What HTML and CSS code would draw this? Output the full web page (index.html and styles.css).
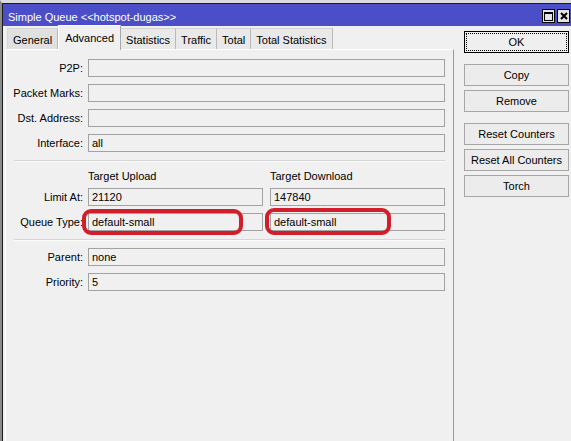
FILE: index.html
```html
<!DOCTYPE html>
<html>
<head>
<meta charset="utf-8">
<title>Simple Queue</title>
<link rel="stylesheet" href="styles.css">
</head>
<body>
<div class="frame">
  <div class="window">
    <div class="titlebar">
      <span class="title">Simple Queue &lt;&lt;hotspot-dugas&gt;&gt;</span>
      <div class="tb-buttons">
        <span class="tb-btn">
          <svg width="9" height="9" viewBox="0 0 9 9"><rect x="0.5" y="0.5" width="8" height="8" fill="none" stroke="#000"/><rect x="0" y="0" width="9" height="2" fill="#000"/></svg>
        </span>
        <span class="tb-btn">
          <svg width="8" height="8" viewBox="0 0 8 8"><path d="M1 1 L7 7 M7 1 L1 7" stroke="#000" stroke-width="2" fill="none"/></svg>
        </span>
      </div>
    </div>
    <div class="main">
      <div class="left">
        <div class="tabs">
          <span class="tab tab-hover">General</span>
          <span class="tab tab-active">Advanced</span>
          <span class="tab">Statistics</span>
          <span class="tab">Traffic</span>
          <span class="tab">Total</span>
          <span class="tab">Total Statistics</span>
        </div>
        <div class="panel">
          <div class="group">
            <div class="row"><span class="lbl">P2P:</span><span class="field"></span></div>
            <div class="row"><span class="lbl">Packet Marks:</span><span class="field"></span></div>
            <div class="row"><span class="lbl">Dst. Address:</span><span class="field"></span></div>
            <div class="row"><span class="lbl">Interface:</span><span class="field">all</span></div>
          </div>
          <div class="sep"></div>
          <div class="rates">
            <div class="row head"><span class="lbl"></span><span class="pair"><span class="colhead">Target Upload</span><span class="colhead">Target Download</span></span></div>
            <div class="row"><span class="lbl">Limit At:</span><span class="pair"><span class="field">21120</span><span class="field">147840</span></span></div>
            <div class="row"><span class="lbl">Queue Type:</span><span class="pair"><span class="field">default-small</span><span class="field">default-small</span></span></div>
          </div>
          <div class="sep"></div>
          <div class="group">
            <div class="row"><span class="lbl">Parent:</span><span class="field">none</span></div>
            <div class="row"><span class="lbl">Priority:</span><span class="field">5</span></div>
          </div>
          <span class="mark mark-up"></span>
          <span class="mark mark-down"></span>
        </div>
      </div>
      <div class="right">
        <div class="btn btn-ok"><span class="focus">OK</span></div>
        <div class="btn gap-top">Copy</div>
        <div class="btn">Remove</div>
        <div class="btn gap-top">Reset Counters</div>
        <div class="btn">Reset All Counters</div>
        <div class="btn">Torch</div>
      </div>
    </div>
  </div>
</div>
</body>
</html>
```
FILE: styles.css
```css
html, body {
  margin: 0;
  padding: 0;
  height: 100%;
  overflow: hidden;
}
body {
  background: #f0f0f0;
  font-family: "Liberation Sans", Arial, sans-serif;
  font-size: 11px;
  color: #000;
}
.frame {
  height: 100%;
  box-sizing: border-box;
  border-top: 3px solid #dcdcdc;
  border-left: 2px solid #8c8c8c;
}
.window {
  height: 100%;
  box-sizing: border-box;
  border-top: 1px solid #1c1c1c;
  border-left: 1px solid #1c1c1c;
  display: flex;
  flex-direction: column;
}
.titlebar {
  height: 22px;
  flex: none;
  background: #4b4ec6;
  color: #fff;
  display: flex;
  align-items: center;
  padding-left: 5px;
}
.title {
  font-size: 11px;
  line-height: 13px;
  padding-top: 5px;
}
.tb-buttons {
  margin-left: auto;
  display: flex;
  gap: 2px;
  padding-right: 1px;
  padding-top: 2px;
}
.tb-btn {
  width: 11px;
  height: 12px;
  border: 1px solid #000;
  background: #e4e4e4;
  display: flex;
  align-items: center;
  justify-content: center;
}
.main {
  flex: 1;
  display: flex;
  min-height: 0;
}
.left {
  width: 451px;
  flex: none;
  display: flex;
  flex-direction: column;
}
.tabs {
  height: 23px;
  flex: none;
  display: flex;
  align-items: flex-end;
  padding-left: 4px;
  position: relative;
  z-index: 1;
}
.tab {
  box-sizing: border-box;
  height: 21px;
  padding: 5px 5px 0;
  line-height: 13px;
  background: #e9e9e9;
  border-top: 1px solid #d4d4d4;
  border-right: 1px solid #b9b9b9;
  white-space: nowrap;
}
.tab-hover {
  background: #e0e0e0;
  border-left: 1px solid #d4d4d4;
}
.tab-active {
  height: 25px;
  padding: 6px 6px 0;
  margin-bottom: -1px;
  background: #f0f0f0;
  border-top: 1px solid #fff;
  border-left: 1px solid #fff;
  border-right: 1px solid #a8a8a8;
}
.panel {
  flex: 1;
  margin-left: 2px;
  position: relative;
  background: #f0f0f0;
  border-top: 1px solid #fff;
  border-left: 1px solid #fff;
  border-right: 1px solid #9a9a9a;
  padding: 9px 8px 0 0;
}
.group {
  display: flex;
  flex-direction: column;
  gap: 7px;
}
.rates {
  display: flex;
  flex-direction: column;
  gap: 7px;
}
.row {
  display: grid;
  grid-template-columns: 77px 1fr;
  column-gap: 5px;
  align-items: center;
  height: 18px;
}
.row.head {
  height: 14px;
  margin-top: 7px;
  margin-bottom: -2px;
}
.lbl {
  text-align: right;
  white-space: nowrap;
}
.field {
  height: 18px;
  box-sizing: border-box;
  border: 1px solid #a2a2a2;
  background: #f0f0f0;
  padding-left: 3px;
  line-height: 16px;
  white-space: nowrap;
  overflow: hidden;
}
.pair {
  display: grid;
  grid-template-columns: 1fr 1fr;
  column-gap: 7px;
}
.colhead {
  line-height: 14px;
}
.sep {
  margin: 8px 0 0 8px;
  height: 1px;
  background: #d6d6d6;
  border-bottom: 1px solid #fbfbfb;
}
.sep + .group {
  margin-top: 7px;
}
.mark {
  position: absolute;
  border: 4px solid #d21e2a;
  border-radius: 9px;
  box-sizing: border-box;
}
.mark-up {
  left: 76px;
  top: 159px;
  width: 161px;
  height: 26px;
}
.mark-down {
  left: 259px;
  top: 158px;
  width: 126px;
  height: 27px;
}
.right {
  flex: 1;
  display: flex;
  flex-direction: column;
  padding: 5px 2px 0 10px;
  gap: 4px;
}
.btn {
  height: 22px;
  box-sizing: border-box;
  border: 1px solid #a6a6a6;
  background: #ececec;
  display: flex;
  align-items: center;
  justify-content: center;
  white-space: nowrap;
}
.btn.gap-top {
  margin-top: 7px;
}
.btn-ok {
  border: 1px solid #000;
  padding: 1px;
  background: #efefef;
}
.focus {
  flex: 1;
  align-self: stretch;
  border: 1px dotted #000;
  display: flex;
  align-items: center;
  justify-content: center;
}
```
